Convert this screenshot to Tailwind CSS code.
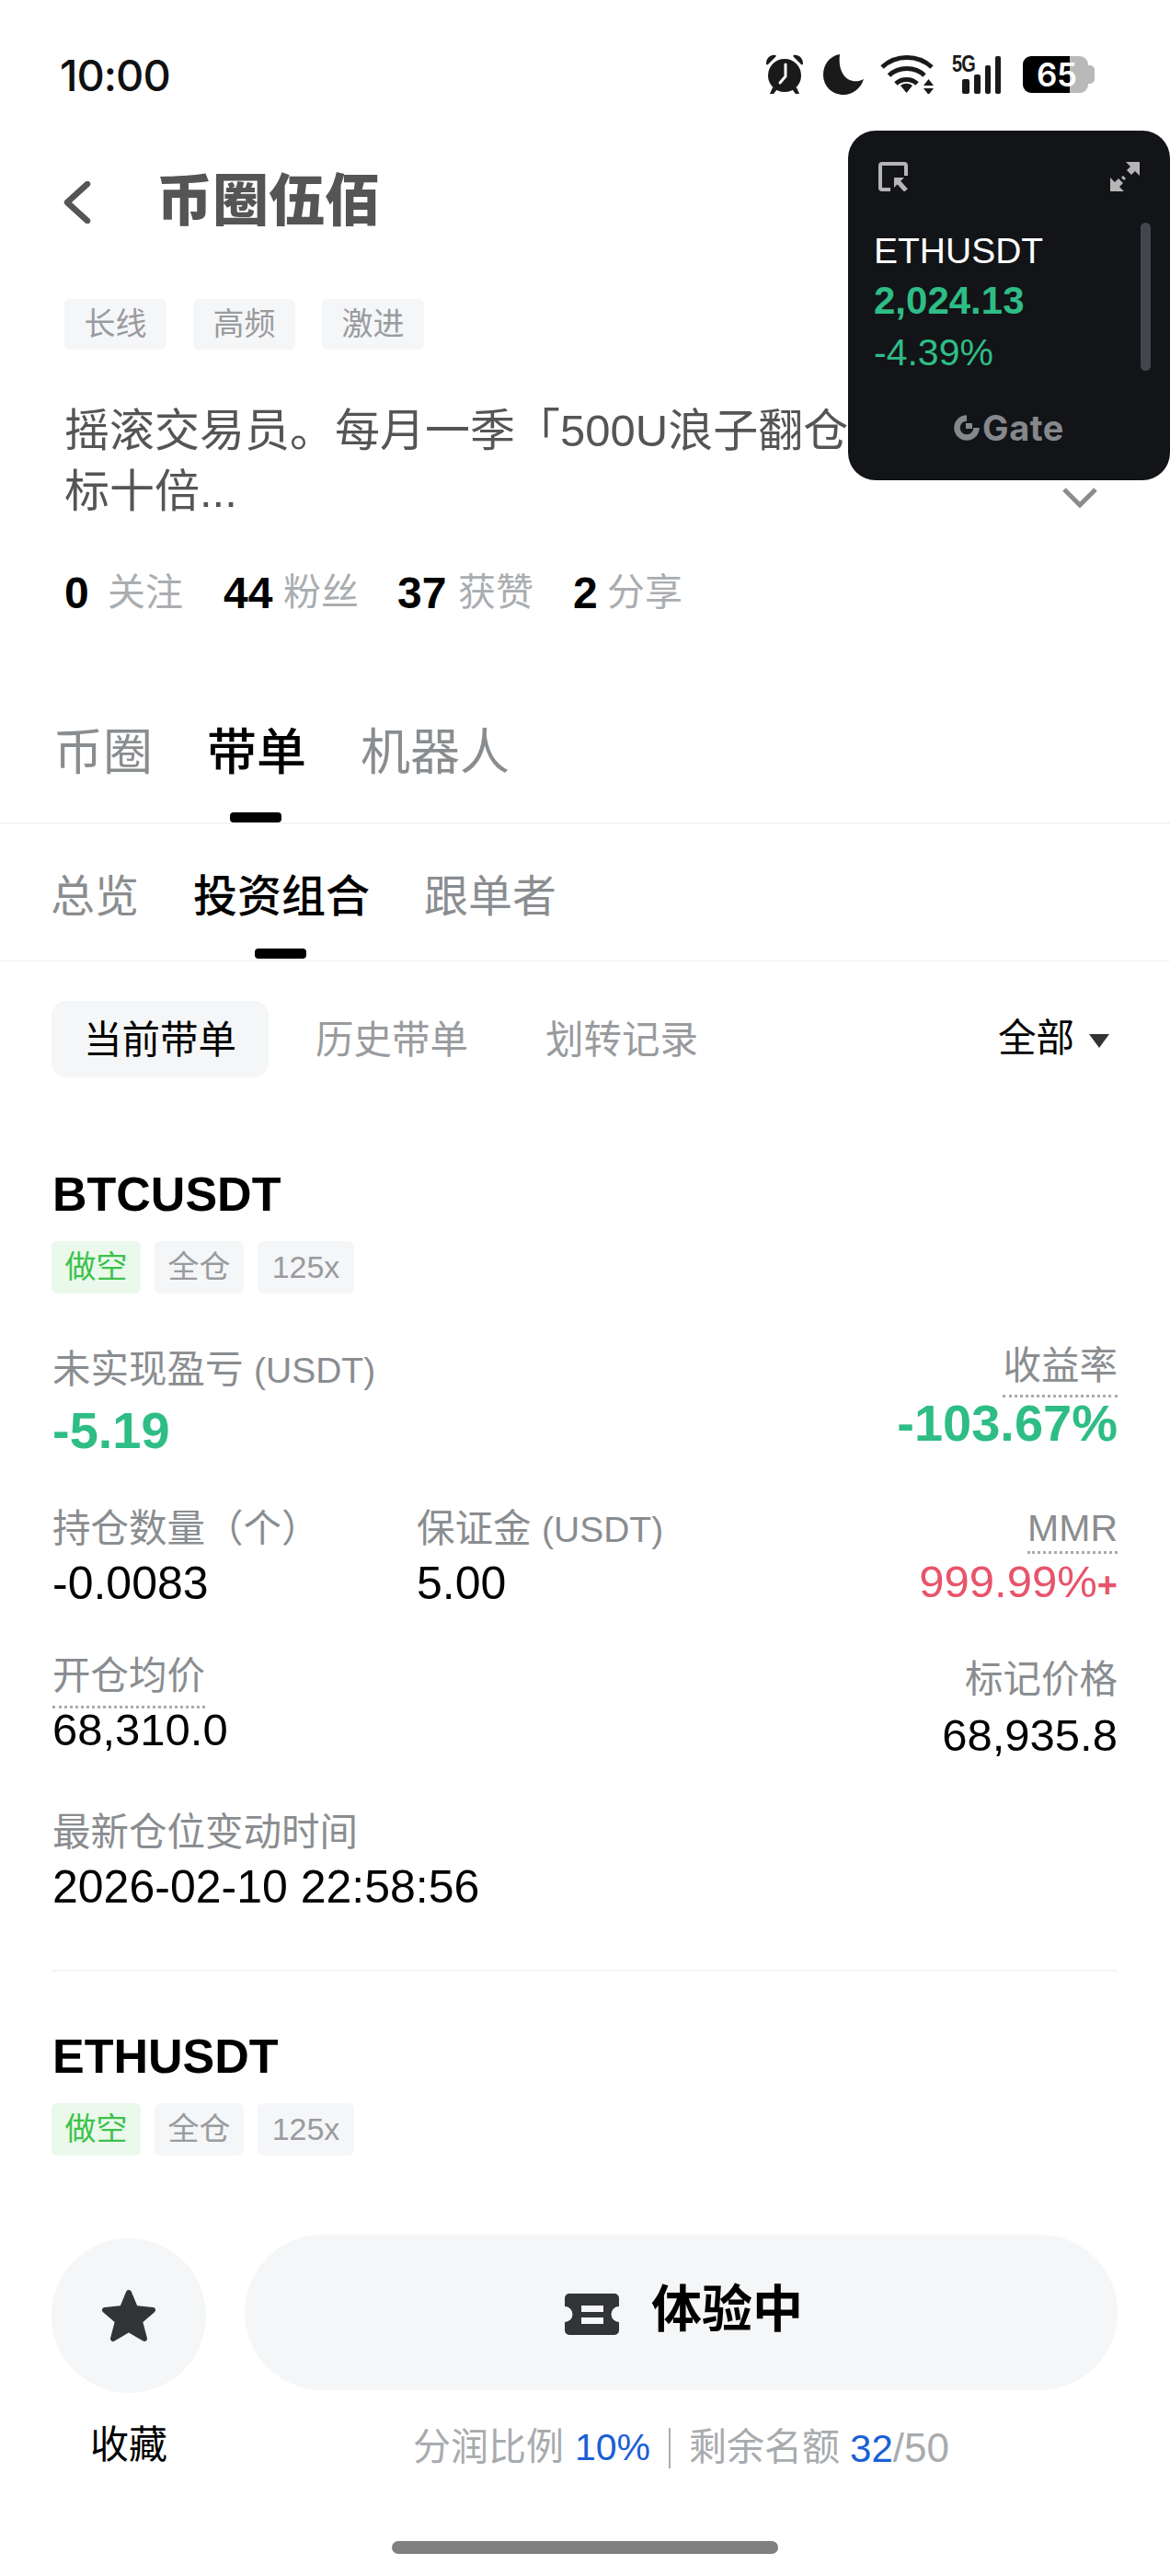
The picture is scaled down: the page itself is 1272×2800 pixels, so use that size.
<!DOCTYPE html>
<html lang="zh-CN">
<head>
<meta charset="utf-8">
<script src="https://cdn.jsdelivr.net/npm/@tailwindcss/browser@4"></script>
</head>
<body class="bg-white">
<div class="relative w-[1272px] h-[2800px] overflow-hidden bg-white font-['Liberation_Sans','Noto_Sans_CJK_SC',sans-serif] text-black">

  <!-- status bar -->
  <div class="h-[162px] flex items-center justify-between pl-[65px] pr-[82px]">
    <span class="font-['Inter',sans-serif] font-medium text-[47px] leading-none text-[#111] tracking-[-1px]">10:00</span>
    <div class="flex items-center h-[50px] gap-[20px]">
      <svg class="ml-[1px]" width="44" height="46" viewBox="0 0 44 46" fill="#1a1a1a">
        <path d="M2 11 C2 5 7 1 12 2 C13 2 13 3 12 4 L4 12 C3 13 2 12 2 11Z"/>
        <path d="M42 11 C42 5 37 1 32 2 C31 2 31 3 32 4 L40 12 C41 13 42 12 42 11Z"/>
        <circle cx="22" cy="24" r="18"/>
        <path d="M9 37 L6 44 H10 L14 39Z M35 37 L38 44 H34 L30 39Z"/>
        <path d="M23 12 V25 L17 32" fill="none" stroke="#fff" stroke-width="3" stroke-linecap="round" stroke-linejoin="round"/>
      </svg>
      <svg width="44" height="46" viewBox="0 0 44 46" fill="#1a1a1a">
        <path d="M18 1 C6 3 0 13 0 23 C0 36 10 45 22 45 C32 45 41 38 44 28 C31 35 15 26 18 1Z"/>
      </svg>
      <svg width="58" height="42" viewBox="0 0 58 42" fill="none" stroke="#1a1a1a" class="-ml-[2px]">
        <path d="M2 13 C17 -1 41 -1 56 13" stroke-width="5"/>
        <path d="M9.500 22 C20 12 38 12 48 22" stroke-width="5"/>
        <path d="M17 31 C23 25 34 25 40 31" stroke-width="5"/>
        <path d="M22 33 C26 30 31 30 35 33 L28.500 41Z" fill="#1a1a1a" stroke="none"/>
        <path d="M47 33 L52.500 26 L58 33Z M47 36 L52.500 43 L58 36Z" fill="#1a1a1a" stroke="none"/>
      </svg>
      <div class="relative w-[57px] h-[42px]">
        <span class="absolute left-0 -top-[3px] origin-left scale-x-[0.8] text-[25px] leading-[25px] font-bold tracking-[-1px] text-[#1a1a1a]">5G</span>
        <div class="absolute left-[11px] bottom-0 flex items-end gap-[5px]">
          <div class="w-[8px] h-[16px] rounded-[2px] bg-[#1a1a1a]"></div>
          <div class="w-[7px] h-[21px] rounded-[2px] bg-[#1a1a1a]"></div>
          <div class="w-[6px] h-[31px] rounded-[2px] bg-[#1a1a1a]"></div>
          <div class="w-[6px] h-[41px] rounded-[2px] bg-[#1a1a1a]"></div>
        </div>
      </div>
      <div class="relative w-[78px] h-[40px] flex items-center">
        <div class="w-[51px] h-[40px] bg-black rounded-l-[9px]"></div>
        <div class="w-[20px] h-[40px] bg-[#b9b9b9] rounded-r-[9px]"></div>
        <div class="w-[7px] h-[20px] bg-[#b9b9b9] rounded-r-[5px]"></div>
        <span class="absolute left-[15px] top-0 font-['Inter',sans-serif] font-semibold text-[35px] leading-[40px] text-white tracking-[-0.5px]">65</span>
      </div>
    </div>
  </div>

  <!-- title -->
  <div class="h-[112px] flex items-center pl-[69px]">
    <svg class="mt-[3px]" width="30" height="46" viewBox="0 0 30 46" fill="none" stroke="#555" stroke-width="6.500" stroke-linecap="round" stroke-linejoin="round"><path d="M26 3 L4 23 L26 43"/></svg>
    <span class="ml-[71px] mt-[2px] text-[61px] leading-none font-black text-[#555]">币圈伍佰</span>
  </div>

  <!-- profile tags -->
  <div class="mt-[51px] flex gap-[29px] pl-[70px]">
    <span class="w-[111px] h-[55px] rounded-[6px] bg-[#f5f6f7] flex items-center justify-center text-[34px] text-[#999b9e]">长线</span>
    <span class="w-[111px] h-[55px] rounded-[6px] bg-[#f5f6f7] flex items-center justify-center text-[34px] text-[#999b9e]">高频</span>
    <span class="w-[111px] h-[55px] rounded-[6px] bg-[#f5f6f7] flex items-center justify-center text-[34px] text-[#999b9e]">激进</span>
  </div>

  <!-- description -->
  <div class="relative mt-[54px] pl-[70px] h-[136px] text-[49px] leading-[68px] text-[#555] whitespace-nowrap">
    <div>摇滚交易员。每月一季「500U浪子翻仓」</div>
    <div class="-mt-[2px]">标十倍...</div>
    <svg class="absolute left-[1154px] top-[95px]" width="40" height="24" viewBox="0 0 40 24" fill="none" stroke="#8c8c8c" stroke-width="5"><path d="M3 3 L20 20 L37 3"/></svg>
  </div>

  <!-- stats -->
  <div class="mt-[45px] h-[60px] flex items-center pl-[70px] whitespace-nowrap">
    <span class="text-[48px] font-bold leading-none w-[47px]">0</span><span class="text-[41px] text-[#aaadb0] w-[126px]">关注</span>
    <span class="text-[48px] font-bold leading-none w-[65px]">44</span><span class="text-[41px] text-[#aaadb0] w-[124px]">粉丝</span>
    <span class="text-[48px] font-bold leading-none w-[66px]">37</span><span class="text-[41px] text-[#aaadb0] w-[125px]">获赞</span>
    <span class="text-[48px] font-bold leading-none w-[37px]">2</span><span class="text-[41px] text-[#aaadb0]">分享</span>
  </div>

  <!-- main tabs -->
  <div class="mt-[63px] h-[158px] pt-[3px] border-b-2 border-[#f3f4f5] flex items-stretch gap-[59px] pl-[58px] text-[54px] leading-none text-[#8a8d90]">
    <div class="flex items-center">币圈</div>
    <div class="relative flex items-center text-black font-medium">带单
      <div class="absolute left-[25px] bottom-0 w-[56px] h-[11px] rounded-[4px] bg-black"></div>
    </div>
    <div class="flex items-center">机器人</div>
  </div>

  <!-- sub tabs -->
  <div class="h-[149px] pt-[9px] border-b border-[#f3f4f5] flex items-stretch gap-[59px] pl-[55px] text-[48px] leading-none text-[#8a8d90]">
    <div class="flex items-center">总览</div>
    <div class="relative flex items-center text-black font-medium">投资组合
      <div class="absolute left-[67px] bottom-[2px] w-[56px] h-[11px] rounded-[4px] bg-black"></div>
    </div>
    <div class="flex items-center">跟单者</div>
  </div>

  <!-- filter -->
  <div class="mt-[43px] flex items-center pl-[56px] pr-[65px] text-[41.500px] text-[#999b9e]">
    <div class="w-[236px] h-[83px] pt-[3px] rounded-[16px] bg-[#f5f6f7] flex items-center justify-center text-black">当前带单</div>
    <div class="ml-[51px] mt-[3px]">历史带单</div>
    <div class="ml-[84px] mt-[3px]">划转记录</div>
    <div class="ml-auto flex items-center text-black -mt-[1px]">全部
      <svg class="ml-[15px] mt-[3px]" width="24" height="20" viewBox="0 0 24 20" fill="#333"><path d="M1 3 H23 L12 18Z"/></svg>
    </div>
  </div>

  <!-- position cards -->
  <div class="px-[57px]">
    <div class="mt-[97px] h-[60px] flex items-center text-[52px] font-bold leading-none">BTCUSDT</div>
    <div class="mt-[21px] -ml-px flex gap-[15px] text-[34px]">
      <span class="w-[97px] h-[57px] rounded-[6px] bg-[#eaf9eb] text-[#3dc24c] flex items-center justify-center">做空</span>
      <span class="w-[97px] h-[57px] rounded-[6px] bg-[#f5f6f7] text-[#999b9e] flex items-center justify-center">全仓</span>
      <span class="w-[105px] h-[57px] rounded-[6px] bg-[#f5f6f7] text-[#999b9e] flex items-center justify-center">125x</span>
    </div>

    <div class="mt-[58px] flex justify-between items-start">
      <div>
        <div class="h-[50px] leading-[50px] text-[41.500px] text-[#8a8d90]">未实现盈亏 <span class="text-[39px]">(USDT)</span></div>
        <div class="mt-[11px] h-[60px] leading-[60px] text-[56px] font-bold text-[#2ebd85]">-5.19</div>
      </div>
      <div class="-mt-[3px] flex flex-col items-end">
        <div class="h-[58px] leading-[48px] text-[41.500px] text-[#8a8d90] border-b-[3px] border-dotted border-[#a8abae]">收益率</div>
        <div class="mt-[2px] h-[52px] leading-[52px] text-[56px] font-bold text-[#2ebd85]">-103.67%</div>
      </div>
    </div>

    <div class="mt-[49px] grid grid-cols-[396px_1fr_auto] items-start">
      <div>
        <div class="h-[50px] pt-[3px] leading-[50px] text-[41.500px] text-[#8a8d90]">持仓数量（个）</div>
        <div class="mt-[9px] h-[56px] leading-[56px] text-[50px]">-0.0083</div>
      </div>
      <div>
        <div class="h-[50px] pt-[3px] leading-[50px] text-[41.500px] text-[#8a8d90]">保证金 <span class="text-[39px]">(USDT)</span></div>
        <div class="mt-[9px] h-[56px] leading-[56px] text-[50px]">5.00</div>
      </div>
      <div class="mt-[2px] flex flex-col items-end">
        <div class="h-[53px] leading-[50px] text-[41px] text-[#8a8d90] border-b-[3px] border-dotted border-[#a8abae]">MMR</div>
        <div class="mt-[2px] h-[56px] leading-[56px] text-[49px] text-[#e8546a]">999.99%<span class="text-[38px] font-bold">+</span></div>
      </div>
    </div>

    <div class="mt-[48px] flex justify-between items-start">
      <div class="flex flex-col items-start">
        <div class="h-[60px] leading-[50px] text-[41.500px] text-[#8a8d90] border-b-[3px] border-dotted border-[#a8abae]">开仓均价</div>
        <div class="h-[46px] leading-[46px] text-[49px]">68,310.0</div>
      </div>
      <div class="mt-[4px] flex flex-col items-end">
        <div class="h-[50px] leading-[50px] text-[41.500px] text-[#8a8d90]">标记价格</div>
        <div class="mt-[7px] h-[56px] leading-[56px] text-[49px]">68,935.8</div>
      </div>
    </div>

    <div class="mt-[51px] h-[50px] pt-[2px] leading-[50px] text-[41.500px] text-[#8a8d90]">最新仓位变动时间</div>
    <div class="mt-[8px] h-[56px] leading-[56px] text-[50px]">2026-02-10 22:58:56</div>

    <div class="mt-[62px] h-[2px] bg-[#f3f4f5]"></div>

    <div class="mt-[62px] h-[60px] flex items-center text-[52px] font-bold leading-none">ETHUSDT</div>
    <div class="mt-[21px] -ml-px flex gap-[15px] text-[34px]">
      <span class="w-[97px] h-[57px] rounded-[6px] bg-[#eaf9eb] text-[#3dc24c] flex items-center justify-center">做空</span>
      <span class="w-[97px] h-[57px] rounded-[6px] bg-[#f5f6f7] text-[#999b9e] flex items-center justify-center">全仓</span>
      <span class="w-[105px] h-[57px] rounded-[6px] bg-[#f5f6f7] text-[#999b9e] flex items-center justify-center">125x</span>
    </div>
  </div>

  <!-- bottom actions -->
  <div class="mt-[86px] pl-[56px] pr-[57px] flex items-start">
    <div class="w-[168px] flex flex-col items-center mt-[4px]">
      <div class="w-[168px] h-[168px] rounded-full bg-[#f5f6f7] flex items-center justify-center">
        <svg width="60" height="58" viewBox="0 0 60 58" fill="#333438" stroke="#333438" stroke-width="6" stroke-linejoin="round"><path d="M30 4 L37 21 L56 23 L42 35 L47 54 L30 44 L13 54 L18 35 L4 23 L23 21Z"/></svg>
      </div>
      <div class="mt-[32px] h-[50px] leading-[50px] text-[42px]">收藏</div>
    </div>
    <div class="flex-1 ml-[42px] flex flex-col items-center">
      <div class="w-full h-[169px] pl-[6px] rounded-full bg-[#f5f6f7] flex items-center justify-center">
        <svg class="mt-[4px]" width="59" height="45" viewBox="0 0 59 45" fill="#333438"><path fill-rule="evenodd" d="M5 0 H54 A5 5 0 0 1 59 5 V14 A8.500 8.500 0 0 0 59 31 V40 A5 5 0 0 1 54 45 H5 A5 5 0 0 1 0 40 V31 A8.500 8.500 0 0 0 0 14 V5 A5 5 0 0 1 5 0Z M18 13 V20 H42 V13Z M18 26 V33 H42 V26Z"/></svg>
        <span class="ml-[35px] -mt-[6px] text-[55px] leading-none font-bold">体验中</span>
      </div>
      <div class="mt-[38px] h-[50px] flex items-center text-[41px] text-[#a8abae] whitespace-nowrap">
        <span>分润比例</span>
        <span class="ml-[12px] text-[#1a5fd6]">10%</span>
        <span class="ml-[20px] w-[2px] h-[44px] bg-[#a8abae]"></span>
        <span class="ml-[20px]">剩余名额</span>
        <span class="ml-[11px] text-[42px] text-[#1a5fd6]">32</span>
        <span class="text-[44px]">/50</span>
      </div>
    </div>
  </div>

  <!-- home indicator -->
  <div class="mt-[76px] mx-auto w-[420px] h-[14px] rounded-full bg-[#808080]"></div>

  <!-- floating ticker window -->
  <div class="absolute left-[922px] top-[142px] w-[350px] h-[380px] rounded-[30px] bg-[#121417]">
    <div class="flex items-center justify-between pt-[34px] pl-[33px] pr-[33px]">
      <svg width="32" height="32" viewBox="0 0 32 32" fill="none" stroke="#b5b5b5" stroke-width="4"><path d="M30 15 V4 A2 2 0 0 0 28 2 H4 A2 2 0 0 0 2 4 V28 A2 2 0 0 0 4 30 H13"/><path d="M17 17 H28 L17 28Z" fill="#b5b5b5" stroke="none"/><path d="M20 20 L30 31" stroke-width="5"/></svg>
      <svg width="32" height="32" viewBox="0 0 32 32" fill="#b5b5b5"><path d="M17 0 H32 V15 L27 10 L23 14 L18 9 L22 5Z"/><path d="M15 32 H0 V17 L5 22 L9 18 L14 23 L10 27Z"/><path d="M14 15 L17 18 L15 20 L12 17Z"/></svg>
    </div>
    <div class="pl-[28px] mt-[37px]">
      <div class="h-[56px] leading-[56px] text-[39px] text-white">ETHUSDT</div>
      <div class="h-[52px] leading-[52px] text-[42px] font-bold text-[#2ebd85]">2,024.13</div>
      <div class="h-[60px] leading-[60px] text-[41px] text-[#2ebd85]">-4.39%</div>
    </div>
    <div class="absolute right-[21px] top-[100px] w-[11px] h-[161px] rounded-full bg-[#42464c]"></div>
    <div class="mt-[32px] h-[40px] flex items-center justify-center gap-[3px]">
      <svg width="28" height="28" viewBox="0 0 28 28" fill="none" stroke="#85888b" stroke-width="6.500"><path d="M14 3.500 A10.500 10.500 0 1 0 24.500 14"/><rect x="13" y="9" width="7" height="6" fill="#85888b" stroke="none"/></svg>
      <span class="font-['Inter',sans-serif] font-bold text-[38px] leading-none tracking-[0.5px] text-[#85888b]">Gate</span>
    </div>
  </div>
</div>
</body>
</html>
